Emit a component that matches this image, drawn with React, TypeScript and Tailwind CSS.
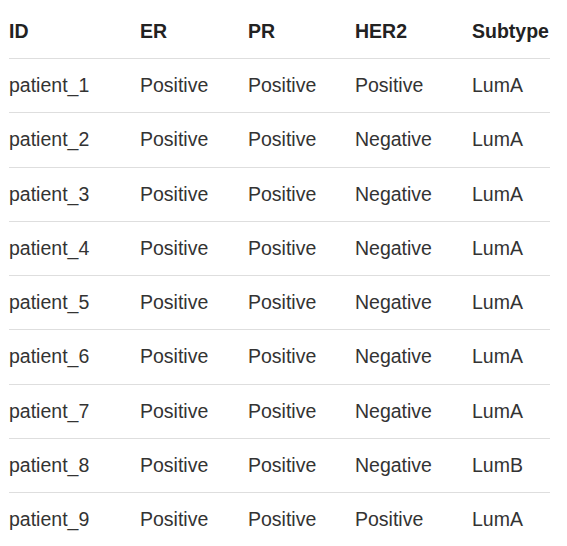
import React from "react";

const rows = [
  ["patient_1", "Positive", "Positive", "Positive", "LumA"],
  ["patient_2", "Positive", "Positive", "Negative", "LumA"],
  ["patient_3", "Positive", "Positive", "Negative", "LumA"],
  ["patient_4", "Positive", "Positive", "Negative", "LumA"],
  ["patient_5", "Positive", "Positive", "Negative", "LumA"],
  ["patient_6", "Positive", "Positive", "Negative", "LumA"],
  ["patient_7", "Positive", "Positive", "Negative", "LumA"],
  ["patient_8", "Positive", "Positive", "Negative", "LumB"],
  ["patient_9", "Positive", "Positive", "Positive", "LumA"],
];

const headers = ["ID", "ER", "PR", "HER2", "Subtype"];

export default function App() {
  return (
    <div
      className="w-[567px] h-[546px] overflow-hidden bg-white pl-[9px]"
      style={{ fontFamily: '"Liberation Sans", Arial, sans-serif' }}
    >
      <div className="w-[541px]">
        <div className="grid grid-cols-[131px_108px_107px_117px_78px] h-[59px] items-center pt-[6px] border-b border-[#dedede] text-[19.5px] font-bold text-[#222222]">
          {headers.map((h) => (
            <div key={h} className="whitespace-nowrap">{h}</div>
          ))}
        </div>
        {rows.map((r) => (
          <div
            key={r[0]}
            className="grid grid-cols-[131px_108px_107px_117px_78px] h-[54.25px] items-center border-b border-[#dedede] text-[19.5px] text-[#333333]"
          >
            {r.map((c, i) => (
              <div key={i} className="whitespace-nowrap">{c}</div>
            ))}
          </div>
        ))}
      </div>
    </div>
  );
}
